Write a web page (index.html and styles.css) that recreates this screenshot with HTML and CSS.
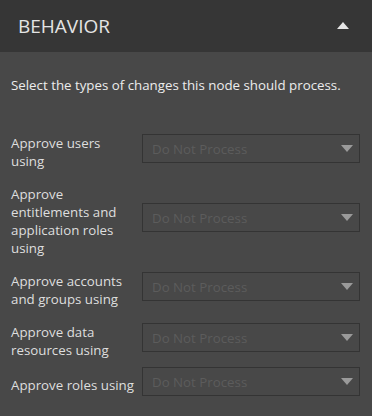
FILE: index.html
```html
<!DOCTYPE html>
<html>
<head>
    <title>Behavior</title>
    <link rel="stylesheet" href="styles.css">
</head>
<body>
    <div class="panel">
        <div class="panel-header">
            <span class="panel-title">BEHAVIOR</span>
            <svg class="collapse" width="12" height="7" viewBox="0 0 12 7"><polygon points="6,0 12,7 0,7" fill="#e6e6e6"/></svg>
        </div>
        <div class="panel-body">
            <p class="intro">Select the types of changes this node should process.</p>
            <div class="fields">
                <label class="field-label">Approve users using</label>
                <div class="select"><span>Do Not Process</span><i class="arrow"></i></div>

                <label class="field-label">Approve entitlements and application roles using</label>
                <div class="select"><span>Do Not Process</span><i class="arrow"></i></div>

                <label class="field-label">Approve accounts and groups using</label>
                <div class="select"><span>Do Not Process</span><i class="arrow"></i></div>

                <label class="field-label">Approve data resources using</label>
                <div class="select"><span>Do Not Process</span><i class="arrow"></i></div>

                <label class="field-label">Approve roles using</label>
                <div class="select"><span>Do Not Process</span><i class="arrow"></i></div>
            </div>
        </div>
    </div>
</body>
</html>
```

FILE: styles.css
```css
body {
    margin: 0;
    background: #484848;
    font-family: "Open Sans", Arial, sans-serif;
    color: #e2e2e2;
}
.panel {
    width: 372px;
    height: 416px;
    background: #484848;
}
.panel-header {
    height: 52px;
    background: #363636;
    display: flex;
    align-items: center;
    justify-content: space-between;
    padding: 0 23px 0 18px;
    box-sizing: border-box;
}
.panel-title {
    font-size: 19px;
    color: #e4e4e4;
    margin-top: -1px;
}
.collapse {
    margin-top: -1px;
}
.panel-body {
    padding: 24px 12px 0 11px;
}
.intro {
    margin: 0;
    font-size: 13.3px;
    line-height: 18px;
    color: #ececec;
}
.fields {
    margin-top: 33px;
    display: grid;
    grid-template-columns: 123px 1fr;
    column-gap: 8px;
    row-gap: 8px;
    align-items: center;
}
.field-label {
    padding-top: 7px;
    font-size: 13.3px;
    line-height: 18px;
    color: #dedede;
}
.select {
    height: 29px;
    border: 1px solid #343434;
    box-sizing: border-box;
    display: flex;
    align-items: center;
    justify-content: space-between;
    padding: 0 6px 0 9px;
    font-size: 13.3px;
    color: #5c5c5c;
}
.arrow {
    width: 0;
    height: 0;
    border-left: 6px solid transparent;
    border-right: 6px solid transparent;
    border-top: 7px solid #9a9a9a;
}
```
